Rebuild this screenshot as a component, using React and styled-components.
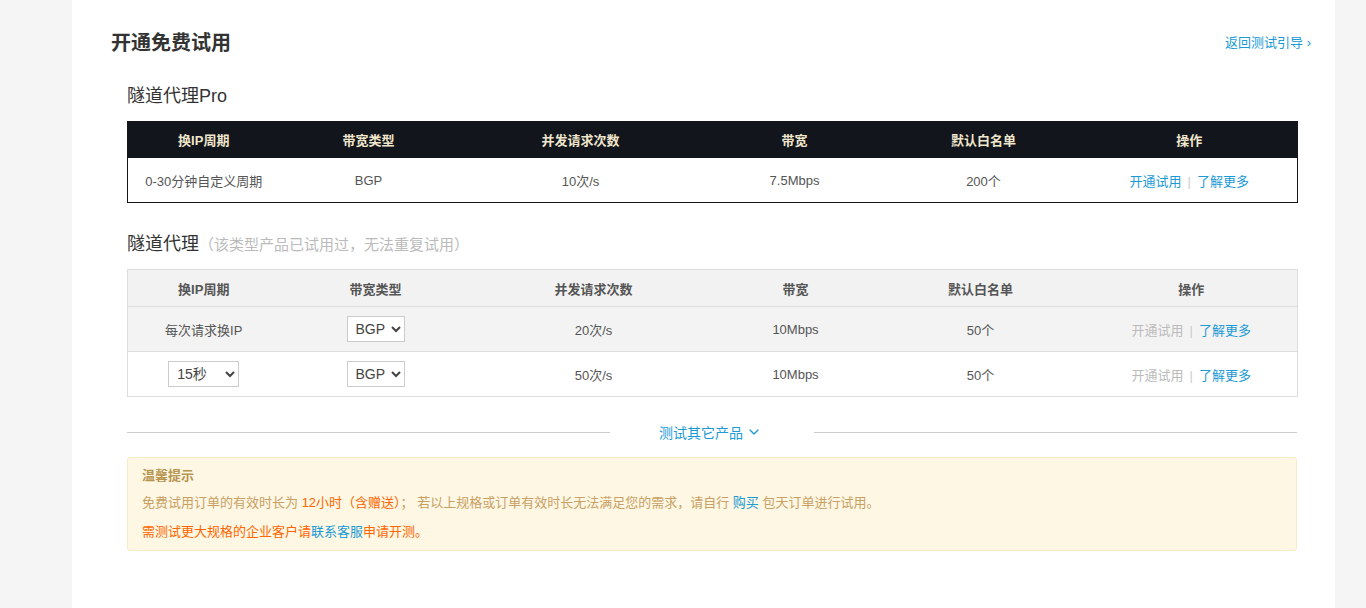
import styled, { createGlobalStyle } from "styled-components";
import { ChevronDown } from "lucide-react";

const GlobalStyle = createGlobalStyle`
  html, body {
    margin: 0;
    padding: 0;
    background: #f5f5f5;
    font-family: "Liberation Sans", "Noto Sans CJK SC", sans-serif;
    color: #555;
  }
`;

const Page = styled.div`
  padding: 0 31px 0 72px;
  min-height: 608px;
`;

const Panel = styled.div`
  background: #fff;
  min-height: 608px;
  padding: 29px 24px 40px 39px;
  box-sizing: border-box;
`;

const TitleRow = styled.div`
  display: flex;
  justify-content: space-between;
  align-items: center;
  height: 28px;
`;

const Title = styled.h1`
  margin: 0;
  font-size: 20px;
  font-weight: bold;
  color: #333;
  line-height: 28px;
`;

const BackLink = styled.a`
  font-size: 13px;
  line-height: 18px;
  margin-top: -1px;
  color: #1b9ad6;
  text-decoration: none;
`;

const Content = styled.div`
  padding: 0 14px 0 16px;
`;

const SectionTitle = styled.h2`
  margin: ${(p) => p.$top}px 0 13px;
  height: 24px;
  font-size: 18px;
  font-weight: normal;
  color: #333;
  line-height: 24px;
`;

const Note = styled.span`
  font-size: 15px;
  color: #bbb;
`;

const Table = styled.table`
  width: 100%;
  border-collapse: collapse;
  table-layout: fixed;
  border: 1px solid ${(p) => (p.$dark ? "#12151c" : "#ddd")};
  font-size: 13px;
`;

const HeadCell = styled.th`
  height: ${(p) => (p.$dark ? 35 : 36)}px;
  padding: 0;
  font-weight: bold;
  background: ${(p) => (p.$dark ? "#12151c" : "#f2f2f2")};
  color: ${(p) => (p.$dark ? "#f0e6cc" : "#555")};
  border-bottom: 1px solid ${(p) => (p.$dark ? "#12151c" : "#ddd")};
`;

const Row = styled.tr`
  background: ${(p) => (p.$gray ? "#f3f3f3" : "#fff")};
  border-bottom: 1px solid #ddd;
`;

const Cell = styled.td`
  height: 44px;
  padding: 0;
  text-align: center;
  color: #555;
`;

const Select = styled.select`
  height: 26px;
  width: ${(p) => p.$w}px;
  font-size: 14px;
  font-family: "Liberation Sans", "Noto Sans CJK SC", sans-serif;
  color: #444;
  background: #fff;
  border: 1px solid #ccc;
  border-radius: 0;
  padding: 0 2px 0 4px;
`;

const Action = styled.a`
  color: ${(p) => (p.$disabled ? "#bbb" : "#1b9ad6")};
  text-decoration: none;
`;

const Sep = styled.span`
  color: #ccc;
  margin: 0 6px;
`;

const Divider = styled.div`
  display: flex;
  align-items: center;
  height: 20px;
  margin-top: 25px;
`;

const Line = styled.div`
  flex: 1;
  height: 1px;
  background: #ccc;
`;

const DividerText = styled.a`
  display: flex;
  align-items: center;
  gap: 3px;
  padding: 0 52px 0 49px;
  font-size: 14px;
  color: #1b9ad6;
`;

const Tip = styled.div`
  margin-top: 15px;
  background: #fdf7e3;
  border: 1px solid #f8ecc8;
  border-radius: 3px;
  padding: 8px 14px 4px;
  font-size: 13px;
  color: #c9a063;
`;

const TipTitle = styled.div`
  font-weight: bold;
  color: #b8944f;
  line-height: 20px;
  margin-bottom: 2px;
`;

const TipLine = styled.div`
  line-height: 29px;
`;

const Em = styled.span`
  color: ${(p) => (p.$blue ? "#1b9ad6" : "#ff6600")};
`;

const proCols = [152, 178, 246, 182, 196, 216];
const tunnelCols = [152, 192, 244, 160, 210, 212];
const heads = ["换IP周期", "带宽类型", "并发请求次数", "带宽", "默认白名单", "操作"];

function Cols({ widths }) {
  return (
    <colgroup>
      {widths.map((w, i) => (
        <col key={i} style={{ width: w }} />
      ))}
    </colgroup>
  );
}

function Actions({ disabled }) {
  return (
    <>
      <Action $disabled={disabled}>开通试用</Action>
      <Sep>|</Sep>
      <Action>了解更多</Action>
    </>
  );
}

export default function App() {
  return (
    <Page>
      <GlobalStyle />
      <Panel>
        <TitleRow>
          <Title>开通免费试用</Title>
          <BackLink href="#">返回测试引导 ›</BackLink>
        </TitleRow>
        <Content>
          <SectionTitle $top={27}>隧道代理Pro</SectionTitle>
          <Table $dark>
            <Cols widths={proCols} />
            <thead>
              <tr>
                {heads.map((h) => (
                  <HeadCell key={h} $dark>{h}</HeadCell>
                ))}
              </tr>
            </thead>
            <tbody>
              <tr>
                <Cell>0-30分钟自定义周期</Cell>
                <Cell>BGP</Cell>
                <Cell>10次/s</Cell>
                <Cell>7.5Mbps</Cell>
                <Cell>200个</Cell>
                <Cell>
                  <Actions />
                </Cell>
              </tr>
            </tbody>
          </Table>

          <SectionTitle $top={29}>
            隧道代理<Note>（该类型产品已试用过，无法重复试用）</Note>
          </SectionTitle>
          <Table>
            <Cols widths={tunnelCols} />
            <thead>
              <tr>
                {heads.map((h) => (
                  <HeadCell key={h}>{h}</HeadCell>
                ))}
              </tr>
            </thead>
            <tbody>
              <Row $gray>
                <Cell>每次请求换IP</Cell>
                <Cell>
                  <Select $w={58} defaultValue="BGP">
                    <option>BGP</option>
                  </Select>
                </Cell>
                <Cell>20次/s</Cell>
                <Cell>10Mbps</Cell>
                <Cell>50个</Cell>
                <Cell>
                  <Actions disabled />
                </Cell>
              </Row>
              <Row>
                <Cell>
                  <Select $w={71} defaultValue="15秒">
                    <option>15秒</option>
                    <option>30秒</option>
                    <option>60秒</option>
                  </Select>
                </Cell>
                <Cell>
                  <Select $w={58} defaultValue="BGP">
                    <option>BGP</option>
                  </Select>
                </Cell>
                <Cell>50次/s</Cell>
                <Cell>10Mbps</Cell>
                <Cell>50个</Cell>
                <Cell>
                  <Actions disabled />
                </Cell>
              </Row>
            </tbody>
          </Table>

          <Divider>
            <Line />
            <DividerText>
              测试其它产品
              <ChevronDown size={16} strokeWidth={2} />
            </DividerText>
            <Line />
          </Divider>

          <Tip>
            <TipTitle>温馨提示</TipTitle>
            <TipLine>
              免费试用订单的有效时长为 <Em>12小时（含赠送）</Em>；
              若以上规格或订单有效时长无法满足您的需求，请自行 <Em $blue>购买</Em>{" "}
              包天订单进行试用。
            </TipLine>
            <TipLine>
              <Em>需测试更大规格的企业客户请</Em>
              <Em $blue>联系客服</Em>
              <Em>申请开测。</Em>
            </TipLine>
          </Tip>
        </Content>
      </Panel>
    </Page>
  );
}
